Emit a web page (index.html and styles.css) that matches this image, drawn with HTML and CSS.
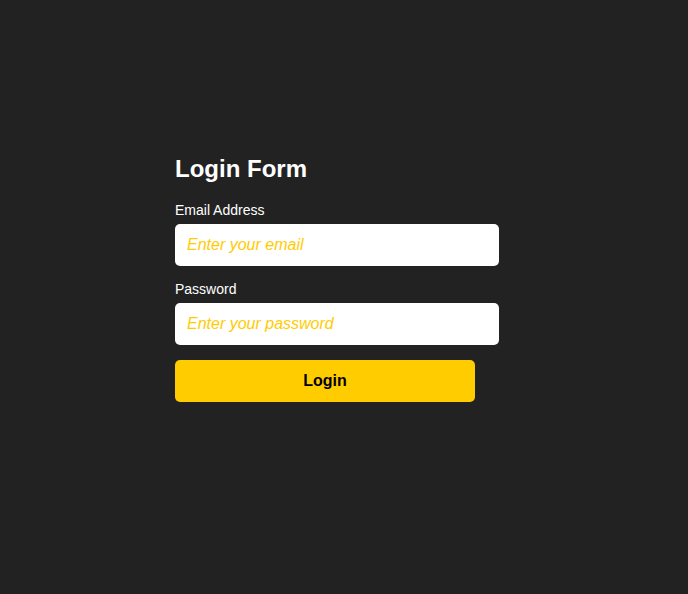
FILE: index.html
```html
<!DOCTYPE html>
<html lang="en">
<head>
<meta charset="utf-8">
<title>Login Form</title>
<link rel="stylesheet" href="styles.css">
</head>
<body>
<main class="page">
  <form class="login-form">
    <h2 class="title">Login Form</h2>
    <div class="field">
      <label class="label" for="email">Email Address</label>
      <input class="input" id="email" type="email" placeholder="Enter your email">
    </div>
    <div class="field">
      <label class="label" for="password">Password</label>
      <input class="input" id="password" type="password" placeholder="Enter your password">
    </div>
    <button class="btn" type="button">Login</button>
  </form>
</main>
</body>
</html>
```
FILE: styles.css
```css
html, body {
  margin: 0;
  padding: 0;
  background: #222222;
  height: 100%;
}
body {
  font-family: "Liberation Sans", Arial, sans-serif;
  color: #ffffff;
}
.page {
  padding: 155px 0 0 175px;
}
.login-form {
  display: flex;
  flex-direction: column;
  width: 324px;
}
.title {
  margin: 0 0 19px;
  font-size: 24px;
  line-height: 28px;
  font-weight: bold;
}
.field {
  display: flex;
  flex-direction: column;
  margin-bottom: 15px;
}
.label {
  font-size: 14px;
  line-height: 16px;
  margin-bottom: 6px;
}
.input {
  box-sizing: border-box;
  height: 42px;
  border: none;
  border-radius: 5px;
  padding: 0 12px;
  background: #ffffff;
  font-family: "Liberation Sans", Arial, sans-serif;
  font-size: 16px;
  color: #222;
  outline: none;
}
.input::placeholder {
  color: #ffcc00;
  font-style: italic;
  opacity: 1;
}
.btn {
  width: 300px;
  height: 42px;
  border: none;
  border-radius: 5px;
  background: #ffcc00;
  color: #000;
  font-family: "Liberation Sans", Arial, sans-serif;
  font-size: 16px;
  font-weight: bold;
  cursor: pointer;
}
```
